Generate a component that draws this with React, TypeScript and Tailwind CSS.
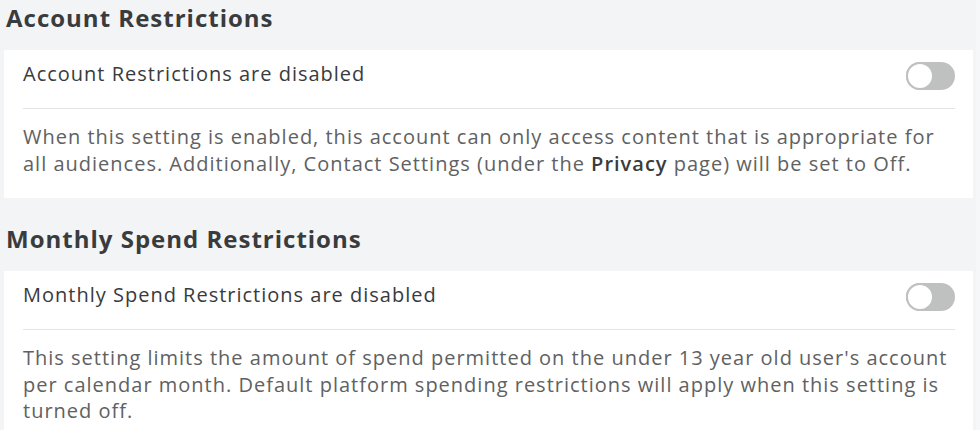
import React from "react";

function Toggle() {
  return (
    <div className="mt-[1px] flex h-[28px] w-[49px] shrink-0 items-center rounded-full bg-[#bfc0c0]">
      <div className="h-[28px] w-[28px] rounded-full border-[2px] border-[#bfc0c0] bg-white" />
    </div>
  );
}

function Section({
  title,
  label,
  children,
  first,
}: {
  title: string;
  label: string;
  children: React.ReactNode;
  first?: boolean;
}) {
  return (
    <section className={first ? "" : "mt-[25px]"}>
      <h2 className="pl-[2px] text-[24px] font-bold leading-[32px] tracking-[1px] text-[#393b3d]">
        {title}
      </h2>
      <div className="mt-4 bg-white px-[19px] pr-[18px]">
        <div className="flex items-start justify-between border-b border-[#e3e4e5] pt-[11px] pb-[18px]">
          <span className="text-[20px] leading-[26.5px] tracking-[1px] text-[#393b3d]">{label}</span>
          <Toggle />
        </div>
        <p className="pt-[15px] pb-[21px] text-[20px] leading-[26.5px] tracking-[1px] text-[#606162]">
          {children}
        </p>
      </div>
    </section>
  );
}

export default function App() {
  return (
    <div className="flex h-[430px] w-[980px] overflow-hidden bg-[#f2f4f5] font-['Open_Sans',sans-serif]">
      <div className="flex-1 pl-[4px] pr-[3px] pt-[2px]">
        <Section first title="Account Restrictions" label="Account Restrictions are disabled">
          When this setting is enabled, this account can only access content that is appropriate for
          all audiences. Additionally, Contact Settings (under the{" "}
          <span className="font-semibold text-[#393b3d]">Privacy</span> page) will be set to Off.
        </Section>
        <Section title="Monthly Spend Restrictions" label="Monthly Spend Restrictions are disabled">
          This setting limits the amount of spend permitted on the under 13 year old user's account
          per calendar month. Default platform spending restrictions will apply when this setting is
          turned off.
        </Section>
      </div>
      <div className="w-[4px] bg-[#f5f7f8]" />
    </div>
  );
}
